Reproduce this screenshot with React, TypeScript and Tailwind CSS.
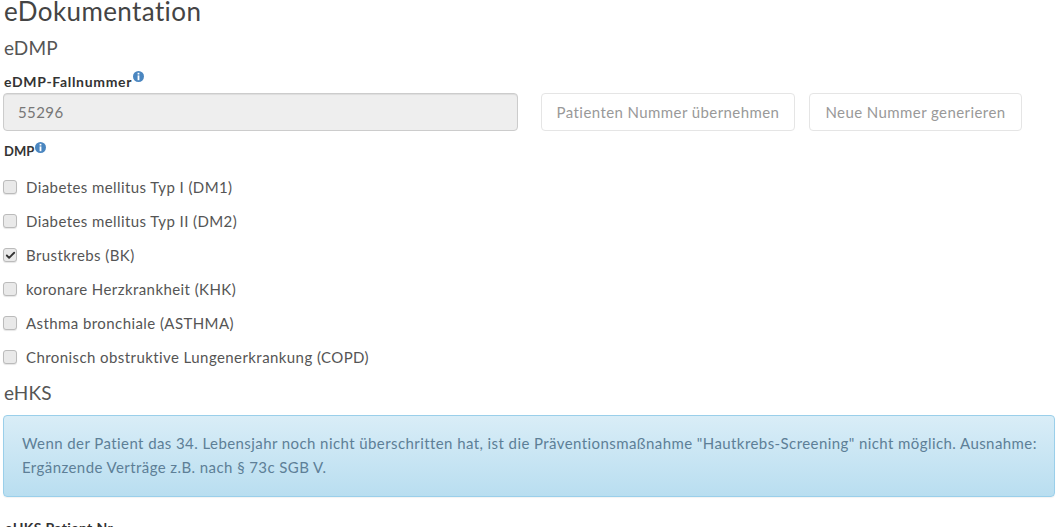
import * as React from "react";
import { Check } from "lucide-react";

const dmpOptions = [
  { label: "Diabetes mellitus Typ I (DM1)" },
  { label: "Diabetes mellitus Typ II (DM2)" },
  { label: "Brustkrebs (BK)", checked: true },
  { label: "koronare Herzkrankheit (KHK)" },
  { label: "Asthma bronchiale (ASTHMA)" },
  { label: "Chronisch obstruktive Lungenerkrankung (COPD)" },
];

function InfoIcon() {
  return (
    <svg className="ml-[1px] mb-[10px] h-[11px] w-[11px] shrink-0" viewBox="0 0 11 11">
      <circle cx="5.5" cy="5.5" r="5.5" fill="#4a86c0" />
      <rect x="4.6" y="1.8" width="1.8" height="1.7" fill="#fff" />
      <rect x="4.6" y="4.4" width="1.8" height="4.8" fill="#fff" />
    </svg>
  );
}

export default function App() {
  return (
    <div className="h-[527px] w-full overflow-hidden bg-white font-['Lato',sans-serif] text-[15px] tracking-[0.42px] text-[#555]">
      <div className="px-[3px]">
        <h1 className="h-[22px] pl-[1px] text-[26px] leading-[22px] tracking-[0.4px] text-[#444]">eDokumentation</h1>

        <h2 className="mt-[14px] h-[24px] pl-[1px] text-[19px] leading-[24px] tracking-[0.1px] text-[#555]">eDMP</h2>

        <div className="mt-[11px] mb-[2px] flex h-[20px] items-center pl-[1px] text-[14px] font-bold tracking-[0.68px] text-[#333]">
          eDMP-Fallnummer
          <InfoIcon />
        </div>

        <div className="flex">
          <div className="flex h-[38px] w-[515px] items-center rounded-[4px] border border-[#ccc] bg-[#eee] px-[14px] text-[#777] shadow-[inset_0_1px_1px_rgba(0,0,0,0.075)]">
            55296
          </div>
          <button className="ml-[23px] h-[38px] w-[254px] rounded-[4px] border border-[#e5e5e5] bg-white text-[#999]">
            Patienten Nummer übernehmen
          </button>
          <button className="ml-[14px] h-[38px] w-[213px] rounded-[4px] border border-[#e5e5e5] bg-white text-[#999]">
            Neue Nummer generieren
          </button>
        </div>

        <div className="mt-[11px] flex h-[20px] items-center pl-[1px] text-[13px] font-bold tracking-normal text-[#333]">
          DMP
          <InfoIcon />
        </div>

        <div className="mt-[15px] flex flex-col gap-[14px]">
          {dmpOptions.map((option) => (
            <div key={option.label} className="flex h-[20px] items-center">
              <span className="flex h-[14px] w-[14px] items-center justify-center rounded-[3px] border border-[#bbb] bg-[#e9e9e9] shadow-[0_1px_1px_rgba(0,0,0,0.1)]">
                {option.checked && <Check className="h-[11px] w-[11px] text-[#333]" strokeWidth={4} />}
              </span>
              <span className="ml-[9px]">{option.label}</span>
            </div>
          ))}
        </div>

        <h2 className="mt-[14px] h-[24px] pl-[1px] text-[19px] leading-[24px] tracking-[0.1px] text-[#555]">eHKS</h2>

        <div className="mt-[10px] h-[82px] w-[1052px] rounded-[4px] border border-[#9acfea] bg-gradient-to-b from-[#d9edf7] to-[#b9def0] py-[15px] pl-[18px] pr-[8px] leading-[24px] text-[#5d7f97] shadow-[0_1px_1px_rgba(0,0,0,0.05)]">
          Wenn der Patient das 34. Lebensjahr noch nicht überschritten hat, ist die Präventionsmaßnahme "Hautkrebs-Screening" nicht möglich. Ausnahme: Ergänzende Verträge z.B. nach § 73c SGB V.
        </div>

        <div className="mt-[21px] pl-[2px] text-[14px] font-bold leading-[20px] tracking-[0.35px] text-[#333]">eHKS Patient Nr</div>
      </div>
    </div>
  );
}
